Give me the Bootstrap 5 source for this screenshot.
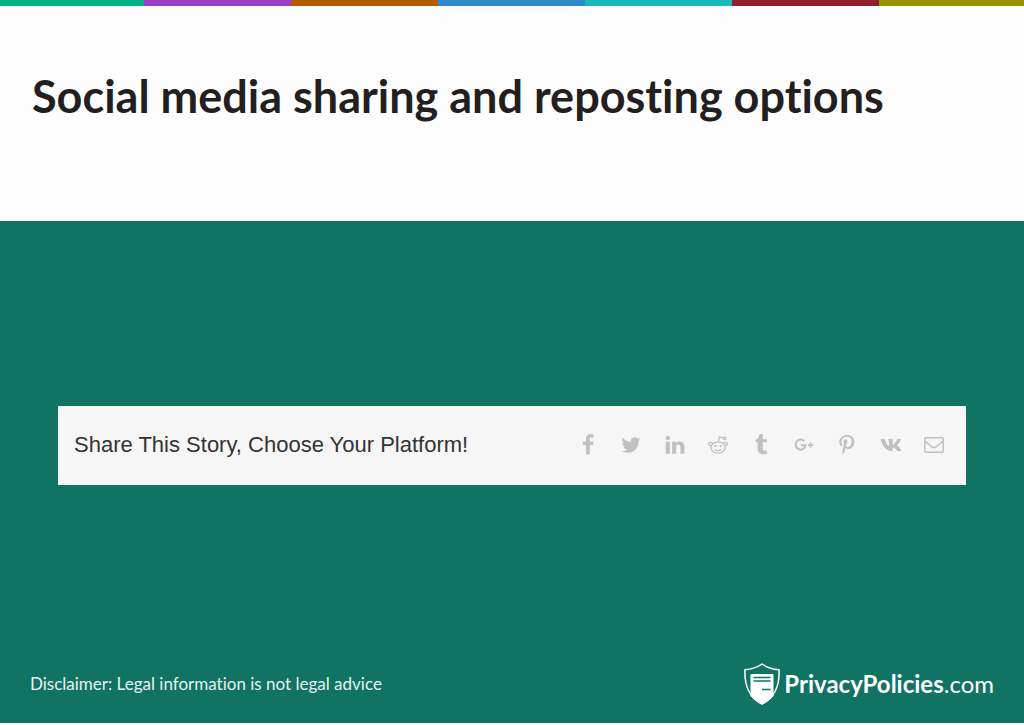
<!DOCTYPE html>
<html lang="en">
<head>
<meta charset="utf-8">
<meta name="viewport" content="width=device-width, initial-scale=1">
<title>Social media sharing and reposting options</title>
<link href="https://cdn.jsdelivr.net/npm/bootstrap@5.3.0/dist/css/bootstrap.min.css" rel="stylesheet">
<style>
  body { font-family: Lato, "Open Sans", sans-serif; font-variant-ligatures: none; background: #fdfdfd; padding-bottom: 2px; }
  .stripes { display: grid; grid-template-columns: 144fr repeat(5, 147fr) 145fr; height: 6px; }
  .s-green { background: #03b287; }
  .s-purple { background: #9a3ec9; }
  .s-orange { background: #b45b00; }
  .s-blue { background: #2d8bcb; }
  .s-teal { background: #1ab8b6; }
  .s-red { background: #8f1e2f; }
  .s-olive { background: #989203; }
  .title-band { padding: 64px 32px 99px; }
  .page-title { font-size: 45px; line-height: 52px; font-weight: 700; color: #231f20; }
  .stage { background: #107363; }
  .stage-body { padding: 6px 58px 0; }
  .share-bar { background: #f6f6f6; padding: 16px 21px 16px 16px; min-height: 79px; }
  .share-title { font-family: "Liberation Sans", Arial, sans-serif; font-size: 22px; line-height: 28px; color: #333; }
  .share-links { width: 368px; }
  .share-links svg { display: block; width: 22px; height: 22px; fill: #c0c0c0; }
  .share-links .line { fill: none; stroke: #c0c0c0; }
  .stage-foot { padding: 0 30px 18px; color: #fff; }
  .disclaimer { font-size: 17px; line-height: 24px; color: #e4f4f0; }
  .brand { font-size: 24px; line-height: 32px; color: #fff; }
  .brand svg { width: 36px; height: 42px; }
</style>
</head>
<body class="d-flex flex-column min-vh-100">
<div class="stripes" aria-hidden="true">
  <span class="s-green"></span><span class="s-purple"></span><span class="s-orange"></span><span class="s-blue"></span><span class="s-teal"></span><span class="s-red"></span><span class="s-olive"></span>
</div>
<header class="title-band">
  <h1 class="page-title m-0">Social media sharing and reposting options</h1>
</header>
<div class="stage flex-grow-1 d-flex flex-column">
  <main class="stage-body flex-grow-1 d-flex flex-column justify-content-center">
    <section class="share-bar d-flex flex-wrap align-items-center justify-content-between">
      <h2 class="share-title m-0">Share This Story, Choose Your Platform!</h2>
      <nav class="share-links d-flex justify-content-between" aria-label="Share">
        <a href="#" aria-label="Facebook"><svg viewBox="0 0 1792 1792"><path d="M1343 12v264h-157q-86 0-116 36t-30 108v189h293l-39 296h-254v759h-306v-759h-255v-296h255v-218q0-186 104-288.5t277-102.5q147 0 228 12z"/></svg></a>
        <a href="#" aria-label="Twitter"><svg viewBox="0 0 1792 1792"><path d="M1684 408q-67 98-162 167 1 14 1 42 0 130-38 259.5t-115.5 248.5-184.5 210.5-258 146-323 54.5q-271 0-496-145 35 4 78 4 225 0 401-138-105-2-188-64.5t-114-159.5q33 5 61 5 43 0 85-11-112-23-185.5-111.5t-73.5-205.5v-4q68 38 146 41-66-44-105-115t-39-154q0-88 44-163 121 149 294.5 238.5t371.5 99.5q-8-38-8-74 0-134 94.5-228.5t228.5-94.5q140 0 236 102 109-21 205-78-37 115-142 178 93-10 186-50z"/></svg></a>
        <a href="#" aria-label="LinkedIn"><svg viewBox="0 0 1792 1792"><path d="M477 625v991h-330v-991h330zm21-306q1 73-50.5 122t-135.5 49h-2q-82 0-132-49t-50-122q0-74 51.5-122.5t134.5-48.5 133 48.5 51 122.5zm1166 729v568h-329v-530q0-105-40.5-164.5t-126.5-59.5q-63 0-105.5 34.5t-63.5 85.5q-11 30-11 81v553h-329q2-399 2-647t-1-296l-1-48h329v144h-2q20-32 41-56t56.5-52 87-43.5 114.5-15.5q171 0 275 113.5t104 332.5z"/></svg></a>
        <a href="#" aria-label="Reddit"><svg viewBox="0 0 22 22"><g class="line" stroke-width="1.3"><ellipse cx="11" cy="13.5" rx="7.2" ry="5.6"/><path d="M4.5 11C1.500 12.500.8 9 3 8.400q1.500-.3 2.800 1M17.500 11c3 1.500 3.700-2 1.500-2.600q-1.500-.3-2.800 1M11.200 7.900l1.300-5 3.900 1M7.800 15.600q3.200 2.400 6.400 0"/><circle cx="17.600" cy="4.300" r="1.400"/></g><circle cx="8.300" cy="12" r="1.200"/><circle cx="13.700" cy="12" r="1.200"/></svg></a>
        <a href="#" aria-label="Tumblr"><svg viewBox="0 0 1792 1792"><path d="M1328 1329l80 237q-23 35-111 66t-177 32q-104 2-190.500-26t-142.500-74-95-106-55.500-120-16.500-118v-544h-168v-215q72-26 129-69.500t91-90 58-102 34-99 15-88.500q1-5 4.500-8.500t7.500-3.500h244v424h333v252h-334v518q0 30 6.500 56t22.500 52.500 49.500 41.500 81.500 14q78-2 134-29z"/></svg></a>
        <a href="#" aria-label="Google Plus"><svg viewBox="0 0 22 22"><path class="line" stroke-width="2" d="M11.300 7.200A5 5 0 1 0 12.600 11.200H7.800"/><path d="M16.800 8.400h1.600v1.900h1.900v1.600h-1.900v1.900h-1.600v-1.900h-1.900v-1.600h1.900z"/></svg></a>
        <a href="#" aria-label="Pinterest"><svg viewBox="-58 -16 560 560"><path d="M204 6.500C101.400 6.500 0 74.900 0 185.600 0 256 39.600 296 63.600 296c9.900 0 15.600-27.600 15.600-35.400 0-9.300-23.700-29.100-23.700-67.800 0-80.400 61.200-137.400 140.400-137.400 68.100 0 118.500 38.700 118.500 109.800 0 53.100-21.300 152.700-90.300 152.700-24.900 0-46.200-18-46.200-43.800 0-37.800 26.400-74.400 26.400-113.400 0-66.200-93.900-54.200-93.900 25.800 0 16.800 2.100 35.400 9.600 50.700-13.800 59.400-42 147.900-42 209.100 0 18.900 2.700 37.500 4.500 56.400 3.400 3.800 1.700 3.400 6.900 1.500 50.400-69 48.600-82.500 71.400-172.800 12.300 23.400 44.100 36 69.300 36 106.200 0 153.900-103.500 153.900-196.800C384 71.300 298.200 6.500 204 6.500z"/></svg></a>
        <a href="#" aria-label="VK"><svg viewBox="0 -32 576 576"><path d="M545 117.700c3.700-12.500 0-21.700-17.800-21.700h-58.900c-15 0-21.900 7.900-25.600 16.700 0 0-30 73.100-72.400 120.500-13.700 13.700-20 18.100-27.500 18.100-3.700 0-9.400-4.400-9.400-16.900V117.700c0-15-4.200-21.700-16.600-21.700h-92.600c-9.400 0-15 7-15 13.500 0 14.200 21.200 17.500 23.400 57.500v86.800c0 19-3.400 22.500-10.900 22.500-20 0-68.600-73.400-97.400-157.400-5.800-16.300-11.500-22.900-26.600-22.900H38.800c-16.800 0-20.200 7.900-20.200 16.700 0 15.600 20 93.100 93.100 195.500C160.400 378.100 229 416 291.400 416c37.500 0 42.100-8.400 42.100-22.900 0-66.800-3.400-73.100 15.400-73.100 8.700 0 23.700 4.400 58.700 38.100 40 40 46.600 57.900 69 57.900h58.900c16.800 0 25.300-8.400 20.400-25-11.200-34.900-86.900-106.700-90.300-111.500-8.700-11.200-6.200-16.200 0-26.200.1-.1 72-101.300 79.400-135.600z"/></svg></a>
        <a href="#" aria-label="Email"><svg viewBox="0 0 22 22"><g class="line" stroke-width="1.500"><rect x="1.800" y="3.800" width="18.400" height="14.400" rx="1"/><path d="M2 7q3 3 7 5.800 2 1.400 4 0Q17 10 20 7"/></g></svg></a>
      </nav>
    </section>
  </main>
  <footer class="stage-foot d-flex flex-wrap align-items-center justify-content-between">
    <p class="disclaimer m-0">Disclaimer: Legal information is not legal advice</p>
    <a href="#" class="brand d-flex align-items-center gap-1 text-decoration-none">
      <svg viewBox="0 0 36 42" aria-hidden="true"><path d="M18 1Q25 6 35 6.800C36 24 29 36 18 41 7 36 0 24 1 6.800 11 6 18 1 18 1z" fill="none" stroke="#fff" stroke-width="1.500"/><path d="M7.500 11h21q1 0 1 1v21Q24 39 18 41.500 12 39 6.500 33V12q0-1 1-1z" fill="#fff"/><path d="M9.500 14.500h17M9.500 18h17M18 26.500h8.500" stroke="#107363" stroke-width="1.400"/></svg>
      <span><strong>PrivacyPolicies</strong>.com</span>
    </a>
  </footer>
</div>
<script src="https://cdn.jsdelivr.net/npm/bootstrap@5.3.0/dist/js/bootstrap.bundle.min.js"></script>
</body>
</html>
